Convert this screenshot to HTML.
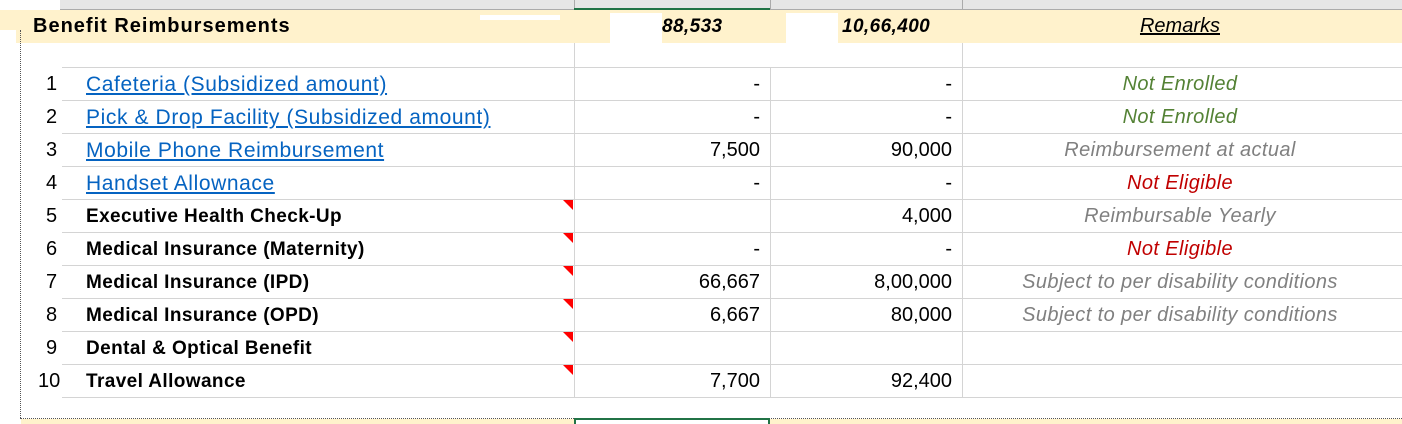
<!DOCTYPE html>
<html><head><style>
body{margin:0;width:1402px;height:424px;position:relative;overflow:hidden;background:#fff;font-family:"Liberation Sans",sans-serif;}
.a{position:absolute}
.t{position:absolute;font-size:20px;line-height:33px;white-space:nowrap}
.b{font-weight:bold;font-size:19px;letter-spacing:0.4px}
.l{color:#0563c1;text-decoration:underline;font-size:21px;letter-spacing:0.6px}
.n{text-align:right}
.r{text-align:center;width:420px;left:970px;font-style:italic;letter-spacing:0.4px}
.hl{position:absolute;left:62px;width:1340px;height:1px;background:#d4d4d4}
.tri{position:absolute;left:563px;width:0;height:0;border-left:10px solid transparent;border-top:10px solid #f00}
</style></head><body>
<div class="a" style="left:60px;top:0;width:1342px;height:9px;background:#e6e6e6;border-bottom:1px solid #ababab"></div>
<div class="a" style="left:574px;top:0;width:1px;height:9px;background:#ababab"></div>
<div class="a" style="left:770px;top:0;width:1px;height:9px;background:#ababab"></div>
<div class="a" style="left:962px;top:0;width:1px;height:9px;background:#ababab"></div>
<div class="a" style="left:574px;top:8px;width:196px;height:2px;background:#217346"></div>
<div class="a" style="left:0;top:10px;width:1402px;height:33px;background:#fff2cc"></div>
<div class="a" style="left:0;top:30px;width:16px;height:13px;background:#fff"></div>
<div class="t b" style="left:33px;top:10px;font-size:20px;letter-spacing:1px">Benefit Reimbursements</div>
<div class="a" style="left:0;top:10px;width:62px;height:8px;background:#fff2cc"></div>
<div class="a" style="left:480px;top:15px;width:80px;height:5px;background:#fff"></div>
<div class="a" style="left:610px;top:13px;width:52px;height:30px;background:#fff"></div>
<div class="a" style="left:786px;top:13px;width:52px;height:30px;background:#fff"></div>
<div class="t b" style="left:662px;top:10px;font-style:italic">88,533</div>
<div class="t b" style="left:842px;top:10px;font-style:italic">10,66,400</div>
<div class="t" style="left:970px;width:420px;text-align:center;top:10px;font-style:italic;text-decoration:underline">Remarks</div>
<div class="a" style="left:20px;top:30px;height:388px;border-left:1px dotted #555"></div>
<div class="a" style="left:20px;top:418px;width:1382px;border-top:1px dotted #555"></div>
<div class="a" style="left:21px;top:419px;width:1381px;height:5px;background:#fff2cc"></div>
<div class="a" style="left:574px;top:418px;width:196px;height:6px;border:2px solid #217346;border-bottom:none;box-sizing:border-box;background:#fff"></div>
<div class="a" style="left:574px;top:43px;width:1px;height:354px;background:#d4d4d4"></div>
<div class="a" style="left:770px;top:67px;width:1px;height:330px;background:#d4d4d4"></div>
<div class="a" style="left:962px;top:43px;width:1px;height:354px;background:#d4d4d4"></div>
<div class="hl" style="top:67px"></div><div class="hl" style="top:100px"></div><div class="hl" style="top:133px"></div><div class="hl" style="top:166px"></div><div class="hl" style="top:199px"></div><div class="hl" style="top:232px"></div><div class="hl" style="top:265px"></div><div class="hl" style="top:298px"></div><div class="hl" style="top:331px"></div><div class="hl" style="top:364px"></div><div class="hl" style="top:397px"></div>
<div class="tri" style="top:200px"></div><div class="tri" style="top:233px"></div><div class="tri" style="top:266px"></div><div class="tri" style="top:299px"></div><div class="tri" style="top:332px"></div><div class="tri" style="top:365px"></div>

<div class="t" style="left:46px;top:68px">1</div><div class="t l" style="left:86px;top:68px">Cafeteria (Subsidized amount)</div>
<div class="t n" style="right:642px;top:68px">-</div><div class="t n" style="right:450px;top:68px">-</div><div class="t r" style="top:68px;color:#548235">Not Enrolled</div>
<div class="t" style="left:46px;top:101px">2</div><div class="t l" style="left:86px;top:101px">Pick &amp; Drop Facility (Subsidized amount)</div>
<div class="t n" style="right:642px;top:101px">-</div><div class="t n" style="right:450px;top:101px">-</div><div class="t r" style="top:101px;color:#548235">Not Enrolled</div>
<div class="t" style="left:46px;top:134px">3</div><div class="t l" style="left:86px;top:134px">Mobile Phone Reimbursement</div>
<div class="t n" style="right:642px;top:134px">7,500</div><div class="t n" style="right:450px;top:134px">90,000</div><div class="t r" style="top:134px;color:#808080">Reimbursement at actual</div>
<div class="t" style="left:46px;top:167px">4</div><div class="t l" style="left:86px;top:167px">Handset Allownace</div>
<div class="t n" style="right:642px;top:167px">-</div><div class="t n" style="right:450px;top:167px">-</div><div class="t r" style="top:167px;color:#c00000">Not Eligible</div>
<div class="t" style="left:46px;top:200px">5</div><div class="t b" style="left:86px;top:200px">Executive Health Check-Up</div>
<div class="t n" style="right:450px;top:200px">4,000</div><div class="t r" style="top:200px;color:#808080">Reimbursable Yearly</div>
<div class="t" style="left:46px;top:233px">6</div><div class="t b" style="left:86px;top:233px">Medical Insurance (Maternity)</div>
<div class="t n" style="right:642px;top:233px">-</div><div class="t n" style="right:450px;top:233px">-</div><div class="t r" style="top:233px;color:#c00000">Not Eligible</div>
<div class="t" style="left:46px;top:266px">7</div><div class="t b" style="left:86px;top:266px">Medical Insurance (IPD)</div>
<div class="t n" style="right:642px;top:266px">66,667</div><div class="t n" style="right:450px;top:266px">8,00,000</div><div class="t r" style="top:266px;color:#808080">Subject to per disability conditions</div>
<div class="t" style="left:46px;top:299px">8</div><div class="t b" style="left:86px;top:299px">Medical Insurance (OPD)</div>
<div class="t n" style="right:642px;top:299px">6,667</div><div class="t n" style="right:450px;top:299px">80,000</div><div class="t r" style="top:299px;color:#808080">Subject to per disability conditions</div>
<div class="t" style="left:46px;top:332px">9</div><div class="t b" style="left:86px;top:332px">Dental &amp; Optical Benefit</div>
<div class="t" style="left:38px;top:365px">10</div><div class="t b" style="left:86px;top:365px">Travel Allowance</div>
<div class="t n" style="right:642px;top:365px">7,700</div><div class="t n" style="right:450px;top:365px">92,400</div>
</body></html>
